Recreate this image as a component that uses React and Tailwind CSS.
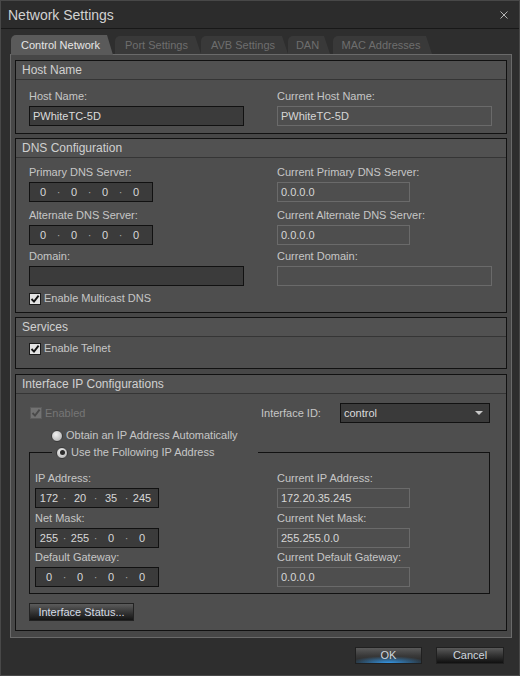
import { Fragment } from "react";

const Check = ({ disabled = false }) => (
  <span
    className={`flex h-[12px] w-[12px] shrink-0 items-center justify-center border ${
      disabled ? "border-[#5c5c5c] bg-[#727272]" : "border-[#1a1a1a] bg-[#e2e2e2]"
    }`}
  >
    <svg viewBox="0 0 10 10" className="h-[10px] w-[10px]">
      <path
        d="M1.5 5 L4 7.6 L8.6 1.6"
        fill="none"
        stroke={disabled ? "#4a4a4a" : "#111"}
        strokeWidth="1.9"
      />
    </svg>
  </span>
);

const Radio = ({ checked = false }) => (
  <span className="flex h-[12px] w-[12px] shrink-0 items-center justify-center rounded-full border border-[#3a3a3a] bg-[radial-gradient(circle_at_40%_35%,#f0f0f0,#a8a8a8)]">
    {checked && <span className="h-[5px] w-[5px] rounded-full bg-[#2a2a2a]" />}
  </span>
);

const Label = ({ children }) => (
  <div className="h-[18px] text-[11px] leading-[16px] text-[#c6c6c6]">{children}</div>
);

const TextBox = ({ value, className = "" }) => (
  <div
    className={`flex h-[20px] items-center border border-[#111] bg-[#3b3b3b] pl-[3px] text-[11px] text-[#dcdcdc] ${className}`}
  >
    {value}
  </div>
);

const ReadBox = ({ value, className = "" }) => (
  <div
    className={`flex h-[20px] items-center border border-[#6a6a6a] pl-[3px] text-[11px] text-[#d6d6d6] ${className}`}
  >
    {value}
  </div>
);

const IpBox = ({ parts }) => (
  <div className="flex h-[20px] w-[124px] items-center border border-[#111] bg-[#3b3b3b] text-[11px] text-[#d8d8d8]">
    {parts.map((p, i) => (
      <Fragment key={i}>
        {i > 0 && <span className="w-[5px] text-center text-[#a8a8a8]">·</span>}
        <span className="w-[26px] text-center">{p}</span>
      </Fragment>
    ))}
  </div>
);

const Group = ({ title, className = "", children }) => (
  <section className={`flex flex-col border border-[#111] bg-[#4e4e4e] ${className}`}>
    <h2 className="h-[19px] border-b border-[#353535] bg-[#515151] pl-[6px] text-[12px] leading-[19px] text-[#d0d0d0]">
      {title}
    </h2>
    {children}
  </section>
);

const tabs = [
  { name: "Port Settings", cls: "ml-[2px] w-[86px]" },
  { name: "AVB Settings", cls: "w-[87px]" },
  { name: "DAN", cls: "w-[42px]" },
  { name: "MAC Addresses", cls: "ml-[3px] w-[99px]" },
];

export default function App() {
  return (
    <div className="flex h-[676px] w-[520px] flex-col border border-[#484848] bg-[#2e2e2e] font-['Liberation_Sans',Arial,sans-serif]">
      {/* title bar */}
      <div className="flex h-[28px] shrink-0 items-center justify-between border-b border-[#181818] bg-[#2c2c2c] pl-[7px] pr-[11px]">
        <span className="pt-[1px] text-[14px] text-[#d2d2d2]">Network Settings</span>
        <svg viewBox="0 0 8 8" className="h-[8px] w-[8px]">
          <path d="M0.5 0.5 L7.5 7.5 M7.5 0.5 L0.5 7.5" stroke="#b4b4b4" strokeWidth="1" />
        </svg>
      </div>

      {/* tabs */}
      <div className="mt-[6px] flex h-[19px] items-end pl-[10px]">
        <div className="relative z-10 mb-[-1px] flex h-[20px] w-[102px] items-center justify-center rounded-tl-[5px] bg-[#5a5a5a] pr-[3px] pt-[1px] text-[11px] text-[#e6e6e6] [clip-path:polygon(0_0,calc(100%-6px)_0,100%_100%,0_100%)]">
          Control Network
        </div>
        {tabs.map((t) => (
          <div
            key={t.name}
            className={`flex h-[18px] items-center justify-center rounded-tl-[5px] bg-[#393939] pr-[3px] pt-[1px] text-[11px] text-[#6e6e6e] [clip-path:polygon(0_0,calc(100%-6px)_0,100%_100%,0_100%)] ${t.cls}`}
          >
            {t.name}
          </div>
        ))}
      </div>

      {/* tab panel */}
      <div className="ml-[9px] flex h-[584px] w-[502px] flex-col border border-[#6a6a6a] bg-[#474747] px-[4px] pt-[5px]">
        <Group title="Host Name" className="h-[74px]">
          <div className="grid grid-cols-[248px_1fr] pl-[13px] pt-[8px]">
            <div>
              <Label>Host Name:</Label>
              <TextBox value="PWhiteTC-5D" className="w-[215px]" />
            </div>
            <div>
              <Label>Current Host Name:</Label>
              <ReadBox value="PWhiteTC-5D" className="w-[215px]" />
            </div>
          </div>
        </Group>

        <Group title="DNS Configuration" className="mt-[4px] h-[175px]">
          <div className="flex flex-col pl-[13px] pt-[6px]">
            <div className="grid grid-cols-[248px_1fr]">
              <div>
                <Label>Primary DNS Server:</Label>
                <IpBox parts={["0", "0", "0", "0"]} />
              </div>
              <div>
                <Label>Current Primary DNS Server:</Label>
                <ReadBox value="0.0.0.0" className="w-[133px]" />
              </div>
            </div>
            <div className="mt-[5px] grid grid-cols-[248px_1fr]">
              <div>
                <Label>Alternate DNS Server:</Label>
                <IpBox parts={["0", "0", "0", "0"]} />
              </div>
              <div>
                <Label>Current Alternate DNS Server:</Label>
                <ReadBox value="0.0.0.0" className="w-[133px]" />
              </div>
            </div>
            <div className="mt-[3px] grid grid-cols-[248px_1fr]">
              <div>
                <Label>Domain:</Label>
                <TextBox value="" className="w-[215px]" />
              </div>
              <div>
                <Label>Current Domain:</Label>
                <ReadBox value="" className="w-[215px]" />
              </div>
            </div>
            <label className="mt-[6px] flex h-[13px] items-center gap-[3px] text-[11px] text-[#c6c6c6]">
              <Check />
              Enable Multicast DNS
            </label>
          </div>
        </Group>

        <Group title="Services" className="mt-[4px] h-[52px]">
          <label className="mt-[5px] flex h-[13px] items-center gap-[3px] pl-[13px] text-[11px] text-[#c6c6c6]">
            <Check />
            Enable Telnet
          </label>
        </Group>

        <Group title="Interface IP Configurations" className="mt-[5px] h-[257px]">
          <div className="flex flex-col pl-[13px] pt-[9px]">
            <div className="grid h-[20px] grid-cols-[232px_79px_150px] items-center">
              <span className="flex items-center gap-[3px] pl-[1px] text-[11px] text-[#767676]">
                <Check disabled />
                Enabled
              </span>
              <span className="text-[11px] text-[#c6c6c6]">Interface ID:</span>
              <div className="flex h-[20px] items-center justify-between border border-[#111] bg-[#3a3a3a] pl-[3px] pr-[6px] text-[11px] text-[#dcdcdc]">
                control
                <svg viewBox="0 0 8 4" className="h-[4px] w-[8px]">
                  <path d="M0 0 H8 L4 4 Z" fill="#c8c8c8" />
                </svg>
              </div>
            </div>

            <label className="mt-[6px] flex h-[13px] items-center gap-[3px] pl-[22px] text-[11px] text-[#c6c6c6]">
              <Radio />
              Obtain an IP Address Automatically
            </label>

            <fieldset className="mt-[4px] w-[461px] border border-[#111] pb-[6px] pl-[5px]">
              <legend className="ml-[17px] flex h-[13px] w-[206px] items-center gap-[3px] pl-[4px] text-[11px] text-[#c6c6c6]">
                <Radio checked />
                Use the Following IP Address
              </legend>
              <div className="flex flex-col pt-[11px]">
                <div className="grid grid-cols-[242px_1fr]">
                  <div>
                    <Label>IP Address:</Label>
                    <IpBox parts={["172", "20", "35", "245"]} />
                  </div>
                  <div>
                    <Label>Current IP Address:</Label>
                    <ReadBox value="172.20.35.245" className="w-[133px]" />
                  </div>
                </div>
                <div className="mt-[2px] grid grid-cols-[242px_1fr]">
                  <div>
                    <Label>Net Mask:</Label>
                    <IpBox parts={["255", "255", "0", "0"]} />
                  </div>
                  <div>
                    <Label>Current Net Mask:</Label>
                    <ReadBox value="255.255.0.0" className="w-[133px]" />
                  </div>
                </div>
                <div className="mt-[1px] grid grid-cols-[242px_1fr]">
                  <div>
                    <Label>Default Gateway:</Label>
                    <IpBox parts={["0", "0", "0", "0"]} />
                  </div>
                  <div>
                    <Label>Current Default Gateway:</Label>
                    <ReadBox value="0.0.0.0" className="w-[133px]" />
                  </div>
                </div>
              </div>
            </fieldset>

            <button className="mt-[9px] flex h-[18px] w-[105px] items-center justify-center border border-[#222] bg-[linear-gradient(to_bottom,#5c5c5c,#3a3a3a_45%,#141414)] text-[11px] text-[#d6dde6]">
              Interface Status...
            </button>
          </div>
        </Group>
      </div>

      {/* dialog buttons */}
      <div className="mt-[9px] flex justify-end gap-[14px] pr-[15px]">
        <button className="flex h-[17px] w-[67px] items-center justify-center border border-[#202020] bg-[radial-gradient(ellipse_60%_45%_at_50%_100%,#3597e6,transparent),linear-gradient(to_bottom,#5a5a5a,#3a3a3a_50%,#262626)] text-[11px] text-[#cfd6de]">
          OK
        </button>
        <button className="flex h-[17px] w-[68px] items-center justify-center border border-[#202020] bg-[linear-gradient(to_bottom,#5a5a5a,#363636_45%,#101010)] text-[11px] text-[#cfd6de]">
          Cancel
        </button>
      </div>
    </div>
  );
}
